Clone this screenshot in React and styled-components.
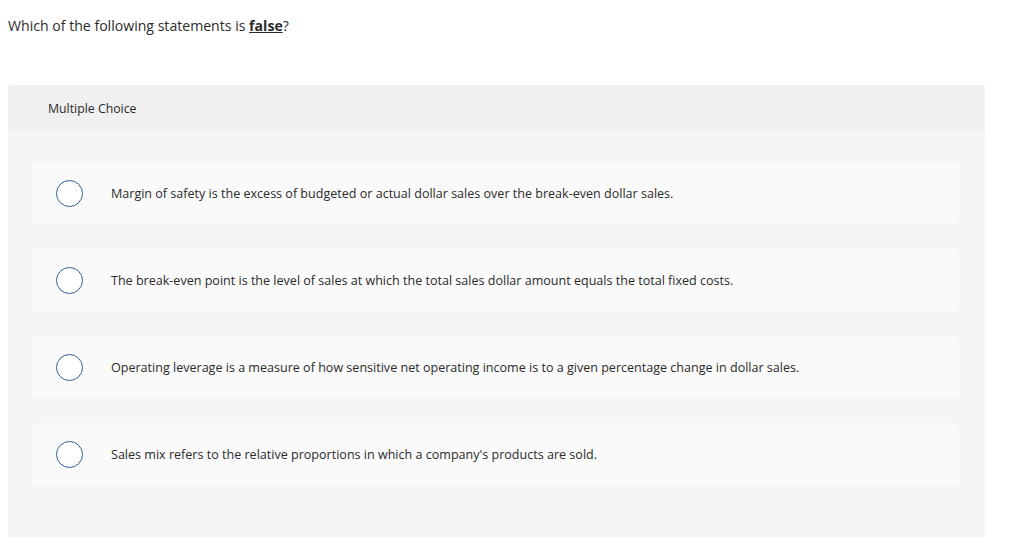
import React from "react";
import styled, { createGlobalStyle } from "styled-components";

const Global = createGlobalStyle`
  body {
    margin: 8px;
    background: #ffffff;
    font-family: "Open Sans", Lato, "Liberation Sans", sans-serif;
    color: #2b2b2b;
  }
`;

const Question = styled.p`
  margin: 0;
  padding-top: 8px;
  font-size: 14.1px;
  line-height: 20px;
  color: #2b2b2b;
  strong {
    font-weight: 700;
    text-decoration: underline;
  }
`;

const Panel = styled.section`
  margin-top: 49px;
  width: 977px;
  background: #f5f5f5;
  border-radius: 3px;
`;

const Header = styled.div`
  height: 47px;
  display: flex;
  align-items: center;
  padding-left: 40px;
  background: #f0f0f0;
  border-radius: 3px 3px 0 0;
  font-size: 12.3px;
  color: #2b2b2b;
`;

const Options = styled.div`
  display: flex;
  flex-direction: column;
  gap: 25px;
  padding: 30px 26px 52px 24px;
`;

const Option = styled.label`
  height: 62px;
  display: flex;
  align-items: center;
  background: #fafafa;
  border-radius: 4px;
  padding-left: 24px;
  cursor: pointer;
`;

const Radio = styled.span`
  width: 27px;
  height: 27px;
  box-sizing: border-box;
  border: 1.5px solid #2f5b97;
  border-radius: 50%;
  background: #ffffff;
  flex: none;
`;

const Text = styled.span`
  margin-left: 28px;
  font-size: 12.55px;
  color: #2b2b2b;
`;

const choices = [
  "Margin of safety is the excess of budgeted or actual dollar sales over the break-even dollar sales.",
  "The break-even point is the level of sales at which the total sales dollar amount equals the total fixed costs.",
  "Operating leverage is a measure of how sensitive net operating income is to a given percentage change in dollar sales.",
  "Sales mix refers to the relative proportions in which a company's products are sold.",
];

export default function App() {
  return (
    <>
      <Global />
      <Question>
        Which of the following statements is <strong>false</strong>?
      </Question>
      <Panel>
        <Header>Multiple Choice</Header>
        <Options>
          {choices.map((c) => (
            <Option key={c}>
              <Radio />
              <Text>{c}</Text>
            </Option>
          ))}
        </Options>
      </Panel>
    </>
  );
}
